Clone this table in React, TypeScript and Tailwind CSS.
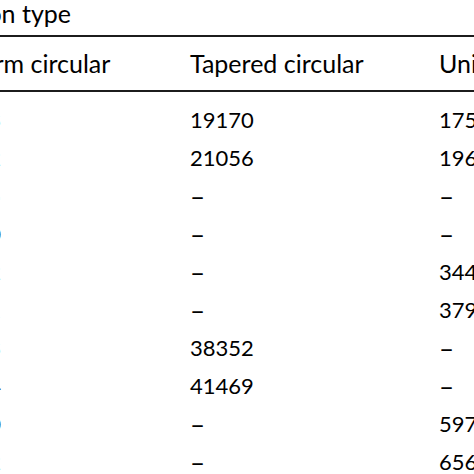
import React from 'react'

const rows: [string, string, string][] = [
  ['17383', '19170', '17542'],
  ['18952', '21056', '19618'],
  ['31285', '–', '–'],
  ['34410', '–', '–'],
  ['34582', '–', '34427'],
  ['37921', '–', '37946'],
  ['36843', '38352', '–'],
  ['39644', '41469', '–'],
  ['58790', '–', '59731'],
  ['64132', '–', '65614'],
]

function Cell({ v }: { v: string }) {
  return <div className={v === '–' ? 'text-[26px]' : ''}>{v}</div>
}

export default function App() {
  return (
    <div
      className="w-[474px] h-[474px] overflow-hidden bg-white text-black leading-none"
      style={{ fontFamily: 'Lato, "Open Sans", sans-serif' }}
    >
      {/* spanning caption, cut off on the left */}
      <div className="h-[35px] flex items-start pt-[1px] text-[25px]">
        <div className="w-[71px] flex justify-end whitespace-nowrap">Cross-section type</div>
      </div>

      <div className="ml-[-66px] w-[720px]">
        {/* header */}
        <div className="border-t-2 border-b-2 border-[#1c1c1c] h-[57px] grid grid-cols-[256px_249px_206px] items-center whitespace-nowrap text-[25px]">
          <div>Uniform circular</div>
          <div>Tapered circular</div>
          <div>Uniform elliptic</div>
        </div>

        {/* body */}
        <div className="pt-[9px] text-[22px]">
          {rows.map((r, i) => (
            <div key={i} className="h-[38px] grid grid-cols-[256px_249px_206px] items-center whitespace-nowrap">
              <div className="text-right pr-[189px]">{r[0]}</div>
              <Cell v={r[1]} />
              <Cell v={r[2]} />
            </div>
          ))}
        </div>
      </div>
    </div>
  )
}
